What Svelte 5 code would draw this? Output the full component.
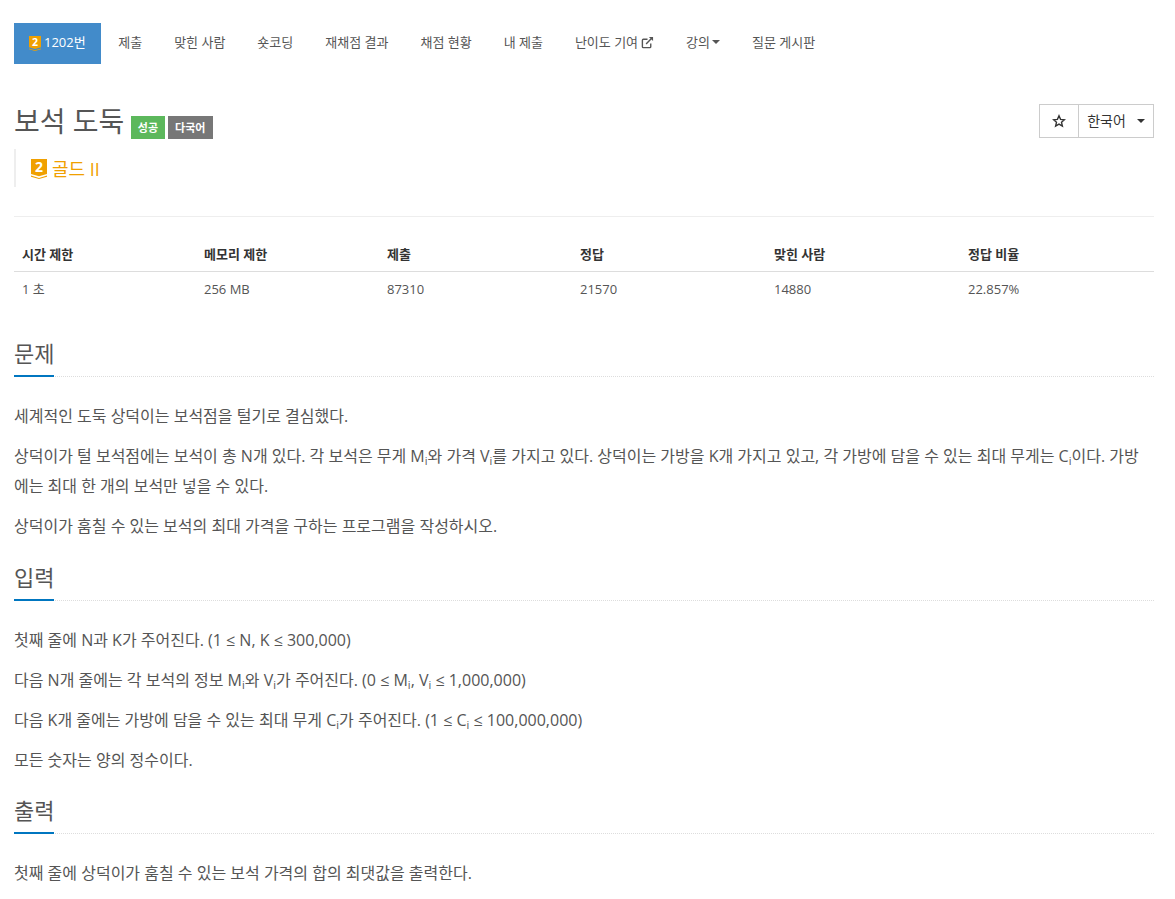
<script lang="ts">
  let tabs = ['제출', '맞힌 사람', '숏코딩', '재채점 결과', '채점 현황', '내 제출'];
  let heads = ['시간 제한', '메모리 제한', '제출', '정답', '맞힌 사람', '정답 비율'];
  let vals = ['1 초', '256 MB', '87310', '21570', '14880', '22.857%'];
</script>

{#snippet gold(w, h)}
  <svg class="tier" viewBox="0 0 16 20" width={w} height={h}>
    <path d="M0 0H16V15L8 17.3L0 15Z" fill="#f0a000" />
    <path d="M0 16.6L8 18.9L16 16.6V17.8L8 20L0 17.8Z" fill="#f0a000" />
    <text x="8" y="13" text-anchor="middle" class="tier-num">2</text>
  </svg>
{/snippet}

<div class="page">
  <ul class="nav">
    <li class="active">{@render gold(12, 15)}<span>1202번</span></li>
    {#each tabs as t}
      <li>{t}</li>
    {/each}
    <li>
      난이도 기여
      <svg class="ext" viewBox="0 0 14 14" width="13" height="13" fill="none" stroke="currentColor" stroke-width="1.5">
        <path d="M10.5 8V11.5Q10.5 12.5 9.5 12.5H2.5Q1.5 12.5 1.5 11.5V4.5Q1.5 3.5 2.5 3.5H7" />
        <path d="M5.5 8.5L12 2" />
        <path d="M8.5 1H13V5.5Z" fill="currentColor" stroke="none" />
      </svg>
    </li>
    <li>강의<i class="caret"></i></li>
    <li>질문 게시판</li>
  </ul>

  <div class="head">
    <h1>보석 도둑</h1>
    <span class="label green">성공</span>
    <span class="label gray">다국어</span>
    <div class="btns">
      <button class="star" aria-label="즐겨찾기">
        <svg viewBox="0 0 24 24" width="14" height="14" fill="none" stroke="#333" stroke-width="2.4" stroke-linejoin="miter">
          <path d="M12 3L14.7 9.2L21.4 9.8L16.3 14.2L17.8 20.8L12 17.3L6.2 20.8L7.7 14.2L2.6 9.8L9.3 9.2Z" />
        </svg>
      </button>
      <button class="lang">한국어<i class="caret dark"></i></button>
    </div>
  </div>

  <blockquote>{@render gold(16, 20)}<span>골드 II</span></blockquote>

  <hr />

  <table>
    <thead>
      <tr>{#each heads as h}<th>{h}</th>{/each}</tr>
    </thead>
    <tbody>
      <tr>{#each vals as v}<td>{v}</td>{/each}</tr>
    </tbody>
  </table>

  <section>
    <h2>문제</h2>
    <p>세계적인 도둑 상덕이는 보석점을 털기로 결심했다.</p>
    <p>상덕이가 털 보석점에는 보석이 총 N개 있다. 각 보석은 무게 M<sub>i</sub>와 가격 V<sub>i</sub>를 가지고 있다. 상덕이는 가방을 K개 가지고 있고, 각 가방에 담을 수 있는 최대 무게는 C<sub>i</sub>이다. 가방에는 최대 한 개의 보석만 넣을 수 있다.</p>
    <p>상덕이가 훔칠 수 있는 보석의 최대 가격을 구하는 프로그램을 작성하시오.</p>
  </section>

  <section>
    <h2>입력</h2>
    <p>첫째 줄에 N과 K가 주어진다. (1 ≤ N, K ≤ 300,000)</p>
    <p>다음 N개 줄에는 각 보석의 정보 M<sub>i</sub>와 V<sub>i</sub>가 주어진다. (0 ≤ M<sub>i</sub>, V<sub>i</sub> ≤ 1,000,000)</p>
    <p>다음 K개 줄에는 가방에 담을 수 있는 최대 무게 C<sub>i</sub>가 주어진다. (1 ≤ C<sub>i</sub> ≤ 100,000,000)</p>
    <p>모든 숫자는 양의 정수이다.</p>
  </section>

  <section>
    <h2>출력</h2>
    <p>첫째 줄에 상덕이가 훔칠 수 있는 보석 가격의 합의 최댓값을 출력한다.</p>
  </section>
</div>

<style>
  :global(body) {
    background: #fff;
    overflow: hidden;
  }

  .page {
    padding: 23px 21px 0 14px;
    font-family: "Open Sans", "Noto Sans CJK KR", sans-serif;
    font-size: 14px;
    line-height: 20px;
    color: #555;
  }

  .nav {
    display: flex;
    list-style: none;
    margin: 0;
    padding: 0;
    font-size: 13px;
  }

  .nav li {
    display: flex;
    align-items: center;
    gap: 3px;
    height: 38px;
    padding: 0 16px 3px;
  }

  .nav li.active {
    height: 41px;
    padding: 0 15px;
    margin-right: 1.5px;
    background: #428bca;
    color: #fff;
  }

  .nav li.active span {
    padding-bottom: 3px;
  }

  .tier {
    display: block;
    flex: none;
    overflow: visible;
  }

  .tier-num {
    font: 700 14px/1 "Open Sans", sans-serif;
    fill: #fff;
  }

  .caret {
    display: inline-block;
    width: 0;
    height: 0;
    margin-left: -1px;
    border-top: 4px solid #555;
    border-left: 4px solid transparent;
    border-right: 4px solid transparent;
  }

  .caret.dark {
    margin-left: 0;
    border-top-color: #333;
  }

  .head {
    display: flex;
    align-items: flex-end;
    margin-top: 40px;
    height: 35px;
  }

  h1 {
    margin: 0 7px 0 0;
    font-size: 28px;
    font-weight: 400;
    line-height: 35px;
    color: #555;
  }

  .label {
    display: block;
    height: 23px;
    margin-right: 3px;
    padding: 0 7.5px;
    font-size: 11px;
    font-weight: 700;
    line-height: 23px;
    color: #fff;
  }

  .green {
    padding: 0 6.5px;
    background: #5cb85c;
  }

  .gray {
    background: #777;
  }

  .btns {
    display: flex;
    margin-left: auto;
    align-self: flex-start;
  }

  button {
    display: flex;
    align-items: center;
    justify-content: center;
    height: 34px;
    background: #fff;
    border: 1px solid #ccc;
    font: inherit;
    color: #333;
    padding: 0;
  }

  .star {
    width: 40px;
  }

  .lang {
    width: 76px;
    margin-left: -1px;
    gap: 11px;
  }

  blockquote {
    display: flex;
    align-items: center;
    gap: 5px;
    box-sizing: border-box;
    height: 38px;
    margin: 10px 0 0;
    padding: 1px 0 0 15px;
    border-left: 2px solid #eee;
    font-size: 18px;
    color: #f0a000;
  }

  hr {
    margin: 29px 0 0;
    border: 0;
    border-top: 1px solid #eee;
  }

  table {
    width: 100%;
    margin-top: 20px;
    border-collapse: collapse;
    table-layout: fixed;
    font-size: 13px;
  }

  th, td {
    box-sizing: border-box;
    padding: 8px;
    text-align: left;
    line-height: 18.5px;
  }

  th {
    padding-bottom: 7px;
    font-weight: 700;
    color: #333;
    border-bottom: 1px solid #ddd;
  }

  td {
    color: #555;
  }

  th:nth-child(1) { width: 182px; }
  th:nth-child(2) { width: 183px; }
  th:nth-child(3) { width: 193px; }
  th:nth-child(4) { width: 194px; }
  th:nth-child(5) { width: 194px; }
  th:nth-child(6) { width: 194px; }

  h2 {
    position: relative;
    margin: 21px 0 0;
    padding-bottom: 8px;
    border-bottom: 1px dotted #ddd;
    font-size: 22px;
    font-weight: 400;
    line-height: 30px;
    color: #555;
  }

  section:first-of-type h2 {
    margin-top: 32px;
  }

  section:last-of-type h2 {
    margin-top: 20px;
  }

  h2::after {
    content: "";
    position: absolute;
    left: 0;
    bottom: -1px;
    width: 40px;
    height: 2px;
    background: #0076c0;
  }

  p {
    margin: 0 0 10px;
    padding-right: 2px;
    font-size: 16px;
    line-height: 30px;
    color: #555;
  }

  h2 + p {
    margin-top: 24px;
  }

  sub {
    font-size: 11px;
    line-height: 0;
    vertical-align: -3px;
  }
</style>
